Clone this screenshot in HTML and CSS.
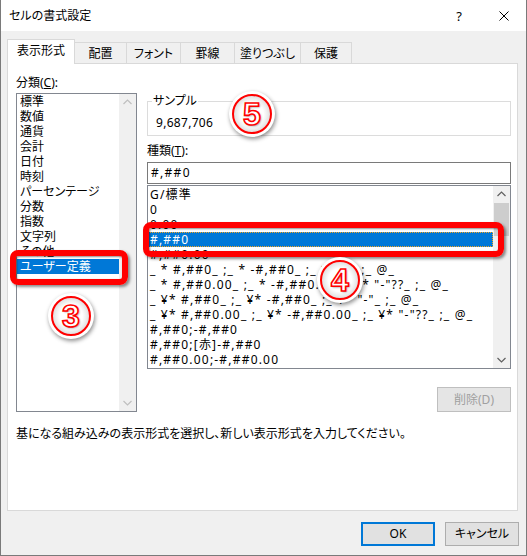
FILE: index.html
```html
<!DOCTYPE html>
<html lang="ja">
<head>
<meta charset="utf-8">
<title>セルの書式設定</title>
<link rel="stylesheet" href="styles.css">
</head>
<body>
<div class="window">
  <div class="titlebar">
    <span class="title">セルの書式設定</span>
    <span class="help">?</span>
    <span class="close"><svg width="10" height="10" viewBox="0 0 10 10"><path d="M0.5 0.5 L9.5 9.5 M9.5 0.5 L0.5 9.5" stroke="#000" stroke-width="1" fill="none"/></svg></span>
  </div>
  <div class="client">
    <div class="tabs">
      <div class="tab active t1">表示形式</div>
      <div class="tab t2">配置</div>
      <div class="tab t3">フォント</div>
      <div class="tab t4">罫線</div>
      <div class="tab t5">塗りつぶし</div>
      <div class="tab t6">保護</div>
    </div>
    <div class="panel">
      <div class="label">分類(<u>C</u>):</div>
      <div class="main">
        <div class="catlist">
          <div class="items">
            <div class="item">標準</div>
            <div class="item">数値</div>
            <div class="item">通貨</div>
            <div class="item">会計</div>
            <div class="item">日付</div>
            <div class="item">時刻</div>
            <div class="item">パーセンテージ</div>
            <div class="item">分数</div>
            <div class="item">指数</div>
            <div class="item">文字列</div>
            <div class="item">その他</div>
            <div class="item sel">ユーザー定義</div>
          </div>
          <div class="vscroll disabled">
            <div class="arrow"><svg width="17" height="17" viewBox="0 0 17 17"><path d="M4.5 10 L8.5 6 L12.5 10" stroke="currentColor" stroke-width="1.2" fill="none"/></svg></div>
            <div class="track"></div>
            <div class="arrow"><svg width="17" height="17" viewBox="0 0 17 17"><path d="M4.5 7 L8.5 11 L12.5 7" stroke="currentColor" stroke-width="1.2" fill="none"/></svg></div>
          </div>
        </div>
        <div class="right">
          <fieldset class="sample">
            <legend>サンプル</legend>
            <div class="sample-value">9,687,706</div>
          </fieldset>
          <div class="label kind">種類(<u>T</u>):</div>
          <div class="input">#,##0</div>
          <div class="fmtlist">
            <div class="items">
              <div class="fitem">G/標準</div>
              <div class="fitem">0</div>
              <div class="fitem">0.00</div>
              <div class="fitem sel">#,##0</div>
              <div class="fitem">#,##0.00</div>
              <div class="fitem">_ * #,##0_ ;_ * -#,##0_ ;_ * "-"_ ;_ @_</div>
              <div class="fitem">_ * #,##0.00_ ;_ * -#,##0.00_ ;_ * "-"??_ ;_ @_</div>
              <div class="fitem">_ ¥* #,##0_ ;_ ¥* -#,##0_ ;_ ¥* "-"_ ;_ @_</div>
              <div class="fitem">_ ¥* #,##0.00_ ;_ ¥* -#,##0.00_ ;_ ¥* "-"??_ ;_ @_</div>
              <div class="fitem">#,##0;-#,##0</div>
              <div class="fitem">#,##0;[赤]-#,##0</div>
              <div class="fitem">#,##0.00;-#,##0.00</div>
            </div>
            <div class="vscroll">
              <div class="arrow"><svg width="17" height="17" viewBox="0 0 17 17"><path d="M4.5 10 L8.5 6 L12.5 10" stroke="currentColor" stroke-width="1.2" fill="none"/></svg></div>
              <div class="track"><div class="thumb"></div></div>
              <div class="arrow"><svg width="17" height="17" viewBox="0 0 17 17"><path d="M4.5 7 L8.5 11 L12.5 7" stroke="currentColor" stroke-width="1.2" fill="none"/></svg></div>
            </div>
          </div>
          <div class="btn del">削除(D)</div>
        </div>
      </div>
      <div class="desc">基になる組み込みの表示形式を選択し、新しい表示形式を入力してください。</div>
    </div>
    <div class="buttons">
      <div class="btn ok">OK</div>
      <div class="btn cancel">キャンセル</div>
    </div>
  </div>

  <div class="mark mark-cat"></div>
  <div class="mark mark-fmt"></div>
  <div class="badge b3"><div class="ring">3</div></div>
  <div class="badge b4"><div class="ring">4</div></div>
  <div class="badge b5"><div class="ring">5</div></div>
</div>
</body>
</html>
```

FILE: styles.css
```css
* { box-sizing: border-box; }
html, body { margin: 0; padding: 0; }
body {
  width: 527px;
  height: 556px;
  overflow: hidden;
  background: #fff;
  font-family: "Noto Sans", "Noto Sans CJK JP", sans-serif;
  font-size: 12px;
  line-height: 16px;
  font-feature-settings: "palt";
  color: #000;
}
.window {
  position: relative;
  width: 527px;
  height: 556px;
  border: 1px solid #7a7a7a;
  border-top: none;
  background: #f0f0f0;
  display: flex;
  flex-direction: column;
}
.titlebar {
  flex: none;
  height: 31px;
  background: #fff;
  display: flex;
  align-items: center;
  padding-left: 8px;
}
.title { flex: 1; }
.help {
  width: 20px;
  text-align: center;
  font-size: 13px;
  margin-right: 30px;
}
.close {
  width: 10px;
  height: 10px;
  margin-right: 17px;
  display: flex;
}
.client {
  flex: 1;
  display: flex;
  flex-direction: column;
  padding-top: 8px;
}
.tabs {
  height: 24px;
  margin-left: 6px;
  display: flex;
  align-items: flex-end;
  position: relative;
  z-index: 1;
}
.tab {
  height: 21px;
  border: 1px solid #d9d9d9;
  border-bottom: none;
  background: #f0f0f0;
  margin-left: -1px;
  display: flex;
  align-items: center;
  justify-content: center;
  padding-top: 1px;
}
.tab.active {
  height: 25px;
  margin-bottom: -1px;
  margin-left: 0;
  background: #fff;
  position: relative;
  z-index: 2;
  padding-top: 0;
  padding-bottom: 2px;
}
.t1 { width: 68px; }
.t2 { width: 53px; }
.t3 { width: 55px; }
.t4 { width: 55px; }
.t5 { width: 67px; }
.t6 { width: 52px; }

.panel {
  height: 448px;
  margin: 0 8px 0 6px;
  background: #fff;
  border: 1px solid #d9d9d9;
  padding: 11px 6px 0 8px;
  display: flex;
  flex-direction: column;
}
.label { height: 16px; }
.main {
  margin-top: 2px;
  display: flex;
  gap: 10px;
}
.catlist {
  width: 121px;
  height: 319px;
  border: 1px solid #828790;
  display: flex;
  overflow: hidden;
}
.items {
  flex: 1;
  min-width: 0;
  overflow: hidden;
}
.item {
  height: 15px;
  line-height: 15px;
  padding-left: 3px;
  white-space: nowrap;
}
.item.sel, .fitem.sel {
  background: #0078d7;
  color: #fff;
}
.vscroll {
  width: 17px;
  flex: none;
  background: #f0f0f0;
  display: flex;
  flex-direction: column;
  color: #606060;
}
.vscroll.disabled { color: #bfbfbf; }
.arrow { height: 17px; display: flex; }
.track { flex: 1; }
.thumb {
  height: 33px;
  margin: 0 1px;
  background: #cdcdcd;
}
.right {
  flex: 1;
  display: flex;
  flex-direction: column;
}
.sample {
  margin: 0;
  padding: 0 0 4px 4px;
  border: 1px solid #dcdcdc;
  min-width: 0;
}
.sample legend {
  padding: 0 1px;
  line-height: 16px;
}
.sample-value {
  margin: 6px 0 0 4px;
  height: 16px;
  letter-spacing: 0.3px;
}
.kind { margin-top: 7px; }
.input {
  margin-top: 3px;
  height: 22px;
  border: 1px solid #7a7a7a;
  padding-left: 3px;
  line-height: 20px;
  letter-spacing: 1.3px;
}
.fmtlist {
  margin-top: 1px;
  height: 184px;
  border: 1px solid #828790;
  display: flex;
}
.fmtlist .items { padding-top: 1px; }
.fitem {
  height: 15px;
  line-height: 15px;
  padding-left: 2px;
  white-space: pre;
  letter-spacing: 1.2px;
}
.fitem.sel {
  outline: 1px dotted #f5a623;
  outline-offset: -1px;
}
.btn {
  width: 74px;
  height: 24px;
  background: #e1e1e1;
  border: 1px solid #adadad;
  display: flex;
  align-items: center;
  justify-content: center;
}
.del {
  align-self: flex-end;
  margin-top: 18px;
  height: 25px;
  color: #a0a0a0;
  border-color: #bfbfbf;
  background: #e5e5e5;
}
.desc { margin-top: 14px; }
.buttons {
  margin-top: 11px;
  padding-right: 7px;
  display: flex;
  justify-content: flex-end;
  gap: 10px;
}
.ok { border: 2px solid #0078d7; }

/* annotations */
.mark {
  position: absolute;
  border: 6px solid #ff0000;
  border-radius: 8px;
  box-shadow: 2px 2px 3px rgba(0,0,0,0.45), inset 1px 1px 2px rgba(0,0,0,0.45);
  z-index: 5;
}
.mark-cat { left: 9px; top: 250px; width: 118px; height: 35px; }
.mark-fmt { left: 142px; top: 222px; width: 361px; height: 35px; }
.badge {
  position: absolute;
  width: 46px;
  height: 46px;
  border-radius: 50%;
  background: #fff;
  box-shadow: 1px 2px 4px rgba(0,0,0,0.45);
  display: flex;
  align-items: center;
  justify-content: center;
  z-index: 6;
}
.ring {
  width: 40px;
  height: 40px;
  border-radius: 50%;
  border: 2.5px solid #ff0000;
  background: radial-gradient(circle, #fff 45%, #d6d6d6 80%, #fff 100%);
  display: flex;
  align-items: center;
  justify-content: center;
  font-family: "Liberation Sans", sans-serif;
  font-weight: bold;
  font-size: 32px;
  line-height: 32px;
  color: #fff;
  -webkit-text-stroke: 1.6px #ff0000;
  text-shadow: 1px 1px 2px #888;
}
.b3 { left: 47px; top: 293px; }
.b4 { left: 316px; top: 257px; }
.b5 { left: 228px; top: 91px; }
```
